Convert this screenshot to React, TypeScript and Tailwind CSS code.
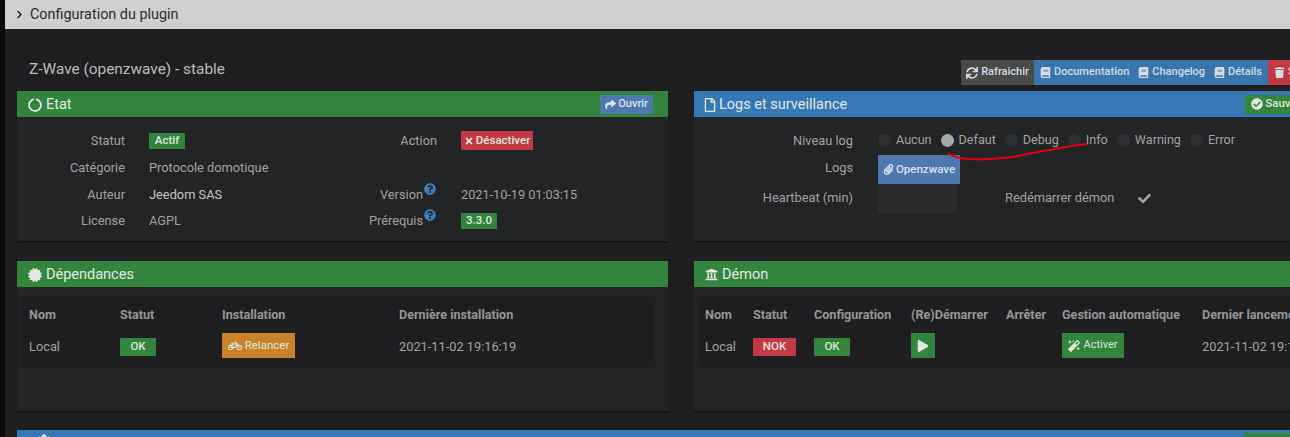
import {
  FaBicycle,
  FaBook,
  FaCertificate,
  FaCheck,
  FaCheckCircle,
  FaCircleNotch,
  FaCog,
  FaMagic,
  FaPaperclip,
  FaPlay,
  FaQuestionCircle,
  FaRegFile,
  FaShare,
  FaSync,
  FaTimes,
  FaTrash,
  FaUniversity,
} from "react-icons/fa";
import { FaChevronRight } from "react-icons/fa";
import type { ReactNode } from "react";

const levels = [
  { name: "Aucun", on: false },
  { name: "Defaut", on: true },
  { name: "Debug", on: false },
  { name: "Info", on: false },
  { name: "Warning", on: false },
  { name: "Error", on: false },
];

const Header = ({ color, icon, title, action }: { color: string; icon: ReactNode; title: string; action?: ReactNode }) => (
  <div className={`flex h-[26px] items-center justify-between pl-[11px] pr-[15px] text-[14.5px] text-[#e4e9e4] ${color}`}>
    <div className="flex items-center gap-[4px] pt-[1px]">
      {icon}
      <span>{title}</span>
    </div>
    {action}
  </div>
);

const Label = ({ children, help }: { children: ReactNode; help?: boolean }) => (
  <div className={`relative text-right text-[12.8px] text-[#a3a3a3] ${help ? "pr-[14px]" : ""}`}>
    {children}
    {help && <FaQuestionCircle className="absolute -top-[2px] right-[1px] text-[12px] text-[#3f7fb8]" />}
  </div>
);

const Tag = ({ children, className }: { children: ReactNode; className: string }) => (
  <span className={`inline-flex items-center justify-center text-[11.5px] font-medium text-[#dfe8df] ${className}`}>{children}</span>
);

const App = () => {
  return (
    <div className="relative flex h-[437px] w-[1290px] overflow-hidden bg-[#1f1f21] font-['Roboto',sans-serif]">
      <div className="w-[5px] shrink-0 bg-[#0b0b0b]" />
      <div className="w-[1340px] shrink-0">
        <div className="flex h-[29px] items-center gap-[6px] bg-[#cfcfcf] pl-[10px] text-[14.4px] text-[#2c2c2c]">
          <FaChevronRight className="text-[9px] text-[#1a1a1a]" />
          <span>Configuration du plugin</span>
        </div>

        <div className="pl-[12px]">
          <div className="flex h-[62px] items-end justify-between pb-[6px]">
            <div className="pb-[4px] pl-[12px] text-[15.4px] text-[#bcbcbc]">Z-Wave (openzwave) - stable</div>
            <div className="flex h-[25px] w-[384px] text-[11px] font-medium text-[#d5dde5]">
              <div className="flex w-[73px] items-center justify-center gap-[3px] bg-[#4a4a4a]">
                <FaSync className="text-[12px]" /> Rafraichir
              </div>
              <div className="flex w-[234px] items-center justify-between bg-[#3a75ad] px-[6px]">
                <span className="flex items-center gap-[3px]"><FaBook className="text-[11px]" /> Documentation</span>
                <span className="flex items-center gap-[3px]"><FaBook className="text-[11px]" /> Changelog</span>
                <span className="flex items-center gap-[3px]"><FaBook className="text-[11px]" /> Détails</span>
              </div>
              <div className="flex flex-1 items-center gap-[3px] bg-[#c23a45] pl-[6px]">
                <FaTrash className="text-[11px]" /> Supprimer
              </div>
            </div>
          </div>

          <div className="grid grid-cols-[651px_651px] gap-x-[26px]">
            {/* Etat */}
            <div className="h-[152px] border-b-2 border-[#141415] bg-[#232425]">
              <Header
                color="bg-[#33843c]"
                icon={<FaCircleNotch className="text-[14px]" />}
                title="Etat"
                action={
                  <div className="flex h-[19px] items-center gap-[2px] bg-[#4f78b0] px-[5px] text-[11px] font-medium text-[#dbe3ee]">
                    <FaShare className="text-[11px]" /> Ouvrir
                  </div>
                }
              />
              <div className="grid grid-cols-[108px_164px_100px_1fr] items-center gap-x-[24px] pt-[10.5px] [grid-auto-rows:26.7px]">
                <Label>Statut</Label>
                <div className="flex"><Tag className="h-[16px] w-[36px] bg-[#33843c]">Actif</Tag></div>
                <Label>Action</Label>
                <div className="flex">
                  <Tag className="h-[19px] w-[72px] gap-[2px] bg-[#c23a45] text-[11.2px]">
                    <FaTimes className="text-[10px]" /> Désactiver
                  </Tag>
                </div>

                <Label>Catégorie</Label>
                <div className="whitespace-nowrap text-[12.8px] text-[#a3a3a3]">Protocole domotique</div>
                <div />
                <div />

                <Label>Auteur</Label>
                <div className="text-[12.8px] text-[#c4c4c4]">Jeedom SAS</div>
                <Label help>Version</Label>
                <div className="text-[12.7px] text-[#a3a3a3]">2021-10-19 01:03:15</div>

                <Label>License</Label>
                <div className="text-[12.8px] text-[#a3a3a3]">AGPL</div>
                <Label help>Prérequis</Label>
                <div className="flex"><Tag className="h-[16px] w-[36px] bg-[#33843c]">3.3.0</Tag></div>
              </div>
            </div>

            {/* Logs */}
            <div className="h-[152px] border-b-2 border-[#141415] bg-[#232425]">
              <Header
                color="bg-[#3578b5]"
                icon={<FaRegFile className="-mx-[2px] text-[14px]" />}
                title="Logs et surveillance"
                action={
                  <div className="-mr-[6px] flex h-[19px] shrink-0 items-center gap-[2px] whitespace-nowrap bg-[#33843c] px-[6px] text-[11.5px] font-medium text-[#dfe8df]">
                    <FaCheckCircle className="shrink-0 text-[12px]" /> Sauvegarder
                  </div>
                }
              />
              <div className="grid grid-cols-[159px_1fr] gap-x-[25px] pt-[11px]">
                <div className="flex h-[25px] items-center justify-end text-[12.8px] text-[#a3a3a3]">Niveau log</div>
                <div className="flex h-[25px] items-center gap-[9px] text-[12.6px] text-[#a3a3a3]">
                  {levels.map((l) => (
                    <label key={l.name} className="flex items-center gap-[5px]">
                      <span className={`h-[13px] w-[13px] rounded-full ${l.on ? "bg-[#a9a9a9]" : "bg-[#2e2f30]"}`} />
                      {l.name}
                    </label>
                  ))}
                </div>

                <div className="flex h-[30px] items-center justify-end text-[12.8px] text-[#a3a3a3]">Logs</div>
                <div className="h-[30px] pt-[2px]">
                  <div className="flex h-[29px] w-[82px] items-center justify-center gap-[2px] bg-[#4f78b0] text-[11.5px] font-medium text-[#dbe3ee]">
                    <FaPaperclip className="text-[11px]" /> Openzwave
                  </div>
                </div>

                <div className="flex h-[29px] items-center justify-end text-[12.8px] text-[#a3a3a3]">Heartbeat (min)</div>
                <div className="flex h-[29px] items-center pt-[1px]">
                  <div className="h-[29px] w-[79px] bg-[#2a2b2c]" />
                  <div className="ml-[48px] text-[12.8px] text-[#a3a3a3]">Redémarrer démon</div>
                  <FaCheck className="ml-[24px] text-[13px] text-[#a3a3a3]" />
                </div>
              </div>
            </div>

            {/* Dépendances */}
            <div className="mt-[18px] h-[152px] border-b-2 border-[#141415] bg-[#232425]">
              <Header color="bg-[#33843c]" icon={<FaCertificate className="text-[14px]" />} title="Dépendances" />
              <div className="mx-[5px] mt-[10px] h-[70px] w-[633px] bg-[#1f1f21] pl-[7px] text-[12.8px] text-[#a3a3a3]">
                <div className="grid h-[35px] grid-cols-[91px_102px_177px_1fr] items-center pt-[1px] text-[12.6px] font-bold text-[#969696]">
                  <div>Nom</div>
                  <div>Statut</div>
                  <div>Installation</div>
                  <div>Dernière installation</div>
                </div>
                <div className="grid h-[30px] grid-cols-[91px_102px_177px_1fr] items-center">
                  <div>Local</div>
                  <div className="flex"><Tag className="h-[18px] w-[36px] bg-[#33843c]">OK</Tag></div>
                  <div className="flex">
                    <Tag className="-mt-[3px] h-[25px] w-[73px] gap-[3px] bg-[#c9812a] font-normal">
                      <FaBicycle className="text-[14px]" /> Relancer
                    </Tag>
                  </div>
                  <div>2021-11-02 19:16:19</div>
                </div>
              </div>
            </div>

            {/* Démon */}
            <div className="mt-[18px] h-[152px] border-b-2 border-[#141415] bg-[#232425]">
              <Header color="bg-[#33843c]" icon={<FaUniversity className="text-[13px]" />} title="Démon" />
              <div className="mx-[5px] mt-[10px] h-[70px] bg-[#1f1f21] pl-[6px] text-[12.8px] text-[#a3a3a3]">
                <div className="grid h-[35px] grid-cols-[48px_61px_97px_95px_56px_140px_1fr] items-center whitespace-nowrap pt-[1px] text-[12.6px] font-bold text-[#969696]">
                  <div>Nom</div>
                  <div>Statut</div>
                  <div>Configuration</div>
                  <div>(Re)Démarrer</div>
                  <div>Arrêter</div>
                  <div>Gestion automatique</div>
                  <div>Dernier lancement</div>
                </div>
                <div className="grid h-[30px] grid-cols-[48px_61px_97px_95px_56px_140px_1fr] items-center whitespace-nowrap">
                  <div>Local</div>
                  <div className="flex"><Tag className="h-[18px] w-[43px] bg-[#c23a45]">NOK</Tag></div>
                  <div className="flex"><Tag className="h-[18px] w-[36px] bg-[#33843c]">OK</Tag></div>
                  <div className="flex">
                    <Tag className="-mt-[3px] h-[25px] w-[24px] bg-[#33843c]">
                      <FaPlay className="text-[12px]" />
                    </Tag>
                  </div>
                  <div />
                  <div className="flex">
                    <Tag className="-mt-[3px] h-[25px] w-[62px] gap-[3px] bg-[#33843c] text-[11px] font-normal">
                      <FaMagic className="text-[12px]" /> Activer
                    </Tag>
                  </div>
                  <div>2021-11-02 19:16:19</div>
                </div>
              </div>
            </div>

            {/* bandeau du bas */}
            <div className="col-span-2 mt-[17px] flex h-[26px] justify-between bg-[#3578b5] pl-[20px] pr-[15px] pt-[3px]">
              <FaCog className="mt-[1px] text-[14px] text-[#dfe8df]" />
              <div className="h-[19px] w-[86px] bg-[#33843c]" />
            </div>
          </div>
        </div>
      </div>

      {/* trait rouge */}
      <svg className="pointer-events-none absolute left-0 top-0" width="1290" height="437" fill="none">
        <path
          d="M948 153 C952 157 958 158 968 159 C985 160 1000 158 1013 157 C1028 154 1040 151 1050 150 C1065 147 1078 145 1087 144"
          stroke="#e8000c"
          strokeWidth="2"
        />
      </svg>
    </div>
  );
};

export default App;
